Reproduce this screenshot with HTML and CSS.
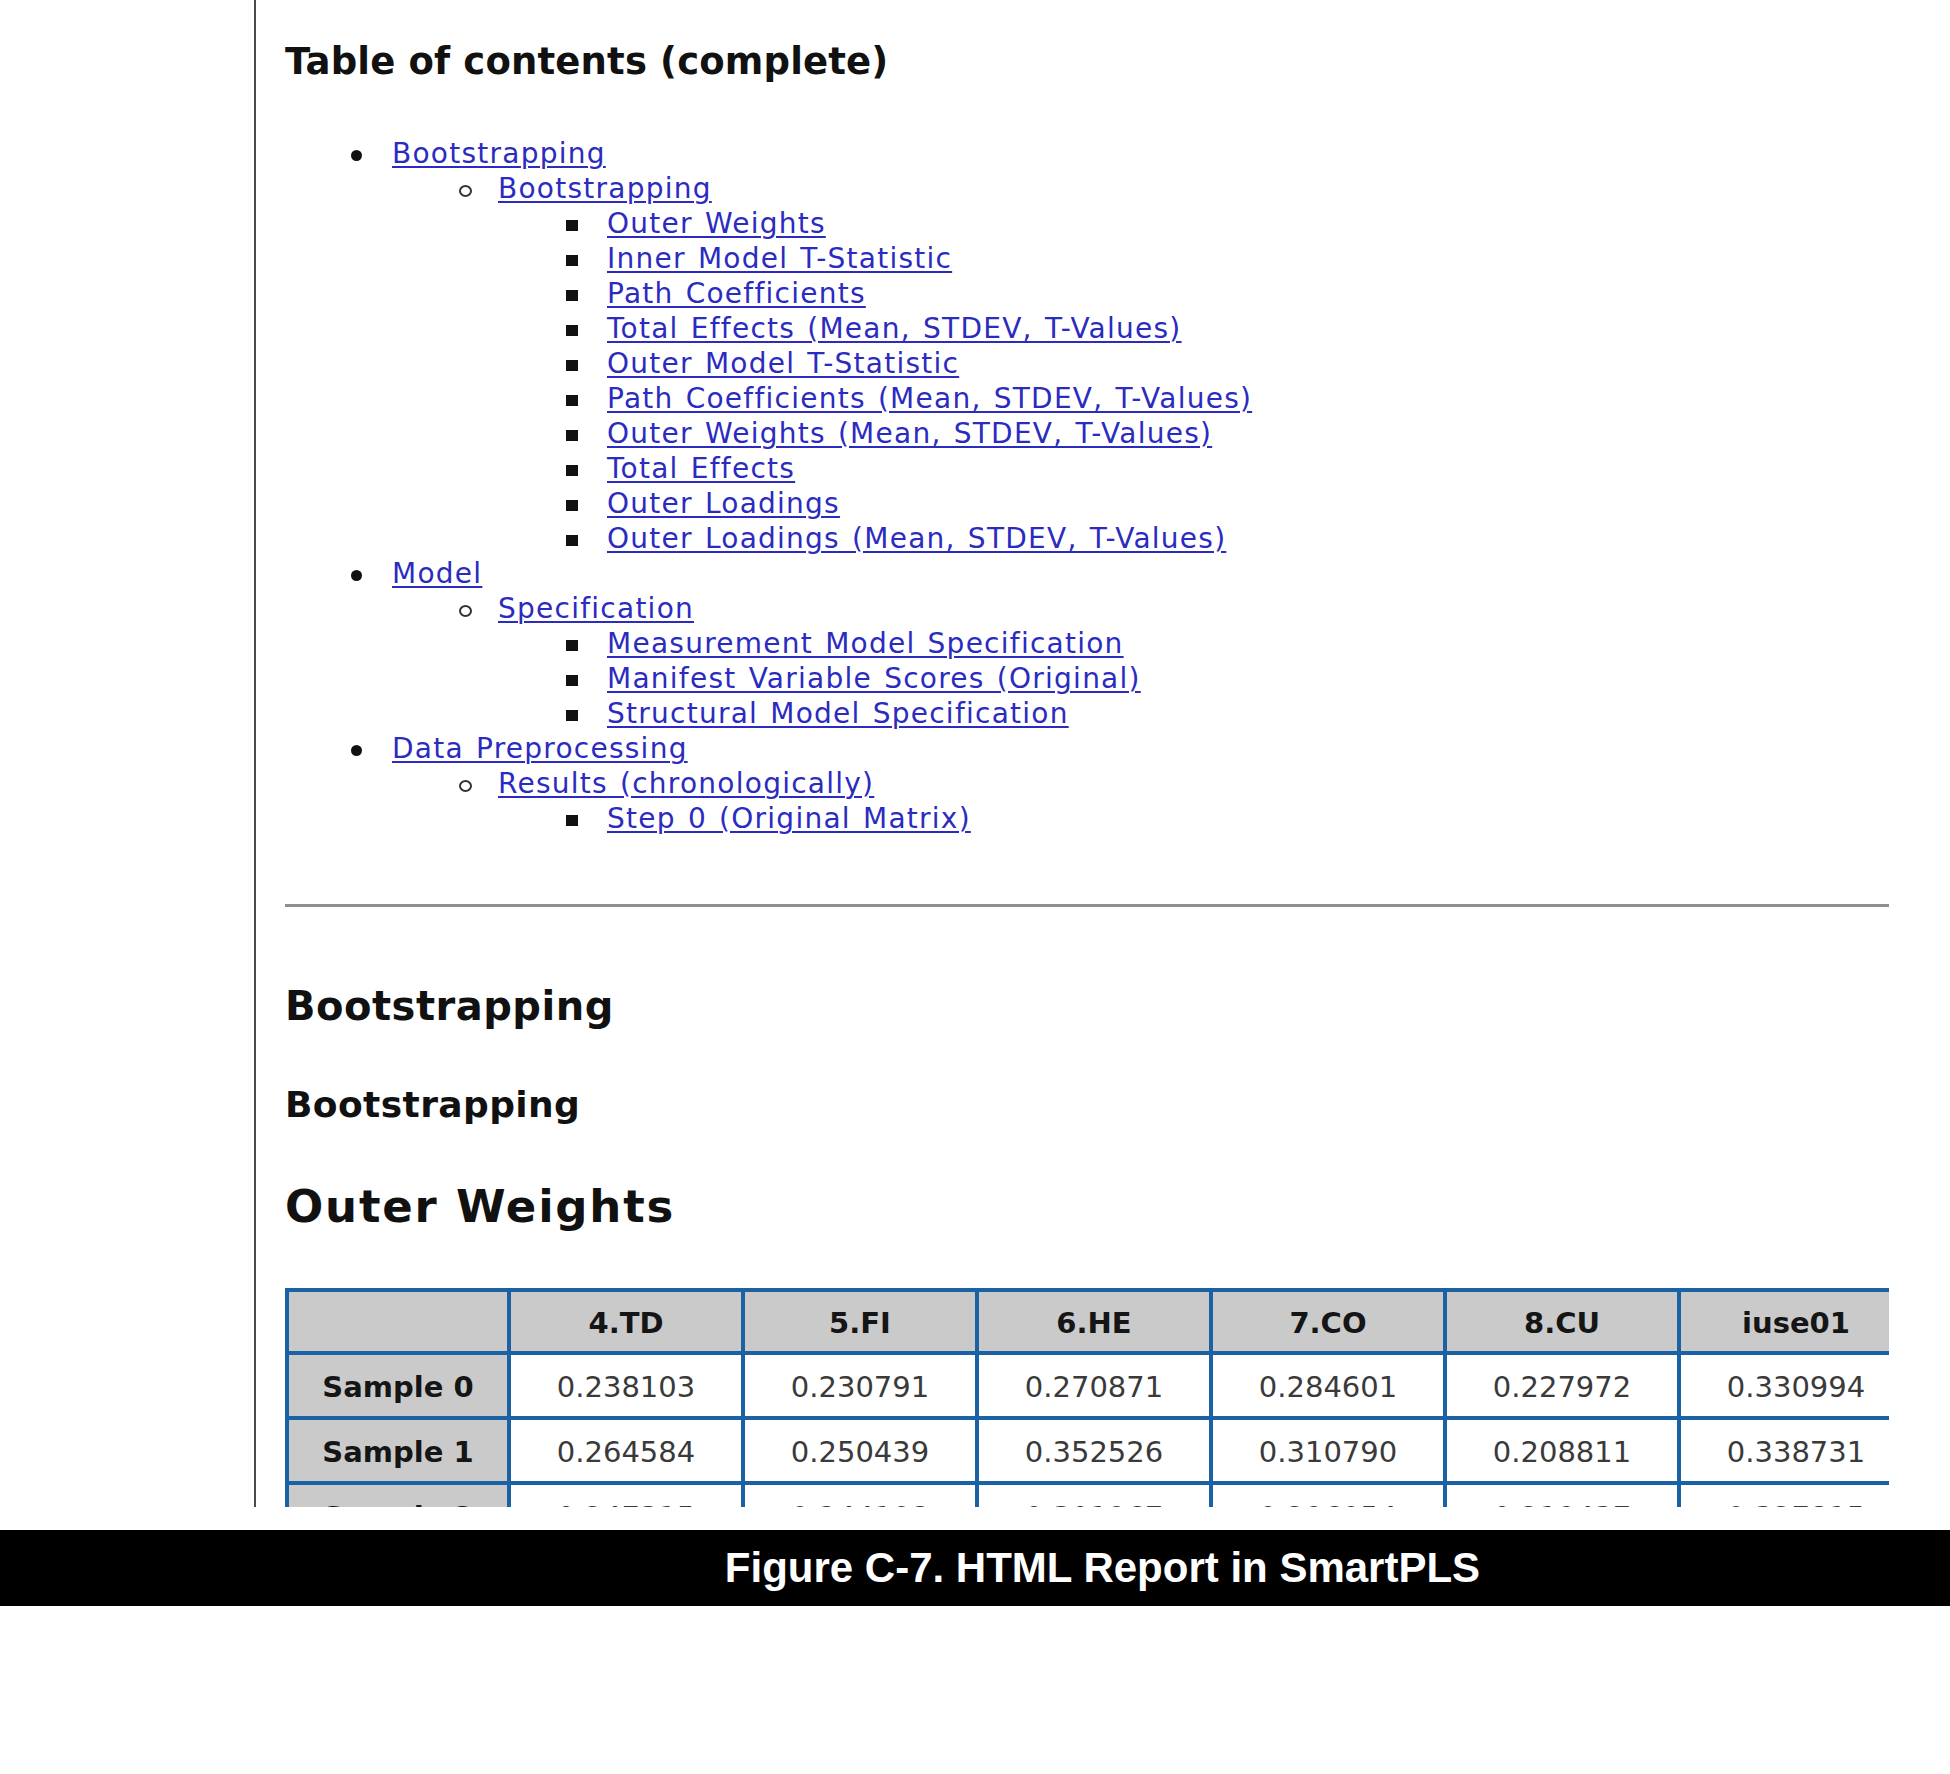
FILE: index.html
```html
<!DOCTYPE html>
<html lang="en">
<head>
<meta charset="utf-8">
<title>HTML Report in SmartPLS</title>
<link rel="stylesheet" href="styles.css">
</head>
<body>
<div class="screen">
  <div class="gutter"></div>
  <main class="report">
    <h3 class="toc-title">Table of contents (complete)</h3>
    <ul class="toc lvl1">
      <li><a href="#b1">Bootstrapping</a>
        <ul class="lvl2">
          <li><a href="#b2">Bootstrapping</a>
            <ul class="lvl3">
              <li><a href="#ow">Outer Weights</a></li>
              <li><a href="#imt">Inner Model T-Statistic</a></li>
              <li><a href="#pc">Path Coefficients</a></li>
              <li><a href="#tem">Total Effects (Mean, STDEV, T-Values)</a></li>
              <li><a href="#omt">Outer Model T-Statistic</a></li>
              <li><a href="#pcm">Path Coefficients (Mean, STDEV, T-Values)</a></li>
              <li><a href="#owm">Outer Weights (Mean, STDEV, T-Values)</a></li>
              <li><a href="#te">Total Effects</a></li>
              <li><a href="#ol">Outer Loadings</a></li>
              <li><a href="#olm">Outer Loadings (Mean, STDEV, T-Values)</a></li>
            </ul>
          </li>
        </ul>
      </li>
      <li><a href="#model">Model</a>
        <ul class="lvl2">
          <li><a href="#spec">Specification</a>
            <ul class="lvl3">
              <li><a href="#mms">Measurement Model Specification</a></li>
              <li><a href="#mvs">Manifest Variable Scores (Original)</a></li>
              <li><a href="#sms">Structural Model Specification</a></li>
            </ul>
          </li>
        </ul>
      </li>
      <li><a href="#dp">Data Preprocessing</a>
        <ul class="lvl2">
          <li><a href="#res">Results (chronologically)</a>
            <ul class="lvl3">
              <li><a href="#step0">Step 0 (Original Matrix)</a></li>
            </ul>
          </li>
        </ul>
      </li>
    </ul>
    <hr class="rule">
    <h2 class="sec-title" id="b1">Bootstrapping</h2>
    <h3 class="sub-title" id="b2">Bootstrapping</h3>
    <h1 class="page-title" id="ow">Outer Weights</h1>
    <table class="weights">
      <colgroup>
        <col class="c-label">
        <col class="c-val"><col class="c-val"><col class="c-val"><col class="c-val">
        <col class="c-val"><col class="c-val"><col class="c-val"><col class="c-val">
      </colgroup>
      <tr class="head-row">
        <th></th><th>4.TD</th><th>5.FI</th><th>6.HE</th><th>7.CO</th><th>8.CU</th><th>iuse01</th><th>iuse02</th><th>iuse03</th>
      </tr>
      <tr>
        <th class="row-head">Sample 0</th><td>0.238103</td><td>0.230791</td><td>0.270871</td><td>0.284601</td><td>0.227972</td><td>0.330994</td><td>0.341205</td><td>0.329118</td>
      </tr>
      <tr>
        <th class="row-head">Sample 1</th><td>0.264584</td><td>0.250439</td><td>0.352526</td><td>0.310790</td><td>0.208811</td><td>0.338731</td><td>0.336472</td><td>0.318640</td>
      </tr>
      <tr>
        <th class="row-head">Sample 2</th><td>0.247315</td><td>0.244108</td><td>0.301967</td><td>0.296054</td><td>0.219437</td><td>0.327815</td><td>0.339021</td><td>0.322476</td>
      </tr>
    </table>
  </main>
</div>
<div class="caption">Figure C-7. HTML Report in SmartPLS</div>
</body>
</html>
```

FILE: styles.css
```css
html, body {
  margin: 0;
  padding: 0;
  background: #ffffff;
}

body {
  font-family: "DejaVu Sans", Verdana, sans-serif;
  color: #111111;
}

.screen {
  display: flex;
  width: 1889px;
  height: 1507px;
  overflow: hidden;
}

.gutter {
  flex: none;
  width: 254px;
}

.report {
  flex: 1;
  min-width: 0;
  overflow: hidden;
  border-left: 2px solid #4a4a4a;
  padding-left: 29px;
}

.toc-title {
  margin: 40px 0 0;
  font-size: 37px;
  line-height: 44px;
  letter-spacing: 0.15px;
  font-weight: bold;
  color: #111111;
}

.toc {
  list-style: none;
  margin: 52px 0 0;
  padding: 0 0 0 107px;
  font-size: 28px;
  line-height: 35px;
  letter-spacing: 1.25px;
  word-spacing: 2px;
}

.toc ul {
  list-style: none;
  margin: 0;
  padding: 0 0 0 106px;
}

.toc ul.lvl3 {
  padding-left: 109px;
}

.toc li {
  position: relative;
}

.toc li::before {
  content: "";
  position: absolute;
  box-sizing: border-box;
}

.lvl1 > li::before {
  left: -41px;
  top: 14px;
  width: 11px;
  height: 11px;
  border-radius: 50%;
  background: #111111;
}

.lvl2 > li::before {
  left: -39px;
  top: 14px;
  width: 13px;
  height: 12px;
  border: 2px solid #333333;
  border-radius: 50%;
}

.lvl3 > li::before {
  left: -41px;
  top: 14px;
  width: 12px;
  height: 11px;
  background: #111111;
}

.toc a {
  color: #2b2bc0;
  text-decoration: underline;
  text-decoration-thickness: 2px;
  text-underline-offset: 3px;
}

.rule {
  margin: 68px 0 0;
  height: 3px;
  border: 0;
  background: #8f8f8f;
}

.sec-title {
  margin: 75px 0 0;
  font-size: 40px;
  line-height: 48px;
  letter-spacing: 0.5px;
  font-weight: bold;
}

.sub-title {
  margin: 53px 0 0;
  font-size: 36px;
  line-height: 43px;
  letter-spacing: 0.4px;
  font-weight: bold;
}

.page-title {
  margin: 54px 0 0;
  font-size: 45px;
  line-height: 54px;
  letter-spacing: 1.8px;
  font-weight: bold;
}

.weights {
  margin-top: 54px;
  border-collapse: collapse;
  table-layout: fixed;
  width: 2094px;
  border: 4px solid #1b62a5;
  font-size: 29px;
}

.weights .c-label {
  width: 222px;
}

.weights .c-val {
  width: 234px;
}

.weights th,
.weights td {
  border: 4px solid #1b62a5;
  padding: 3px 0 0;
  text-align: center;
  vertical-align: middle;
  white-space: nowrap;
}

.weights tr {
  height: 65px;
}

.weights .head-row {
  height: 63px;
}

.weights th {
  background: #cacaca;
  font-weight: bold;
  color: #151515;
}

.weights td {
  background: #ffffff;
  color: #3a3a3a;
}

.caption {
  margin-top: 23px;
  height: 76px;
  background: #000000;
  color: #ffffff;
  font-family: "Liberation Sans", Arial, sans-serif;
  font-weight: bold;
  font-size: 42px;
  line-height: 76px;
  text-align: center;
  padding-left: 255px;
}
```
